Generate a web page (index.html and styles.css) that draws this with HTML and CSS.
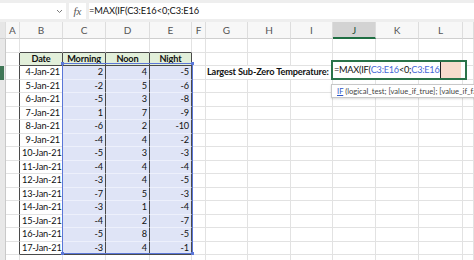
FILE: index.html
```html
<!DOCTYPE html>
<html lang="en">

<head>
    <meta charset="UTF-8">
    <meta name="viewport" content="width=device-width, initial-scale=1.0">
    <title>Temperaturas</title>

    <link rel="stylesheet" href="styles.css">
</head>

<body>
    <!-- barra de formula -->
    <div class="barra">
        <div class="nome-caixa">
            <svg class="seta" width="7" height="5" viewBox="0 0 7 5"><path d="M1 1 L3.5 3.5 L6 1" fill="none" stroke="#7a7a7a" stroke-width="1"/></svg>
        </div>
        <div class="fx-caixa"><i>fx</i></div>
        <div class="formula">=MAX(IF(C3:E16&lt;0;C3:E16</div>
    </div>

    <!-- planilha -->
    <div class="folha">
        <table class="grade">
            <colgroup>
                <col style="width:6px"><col style="width:14px"><col style="width:43px"><col style="width:43px">
                <col style="width:44px"><col style="width:42px"><col style="width:14px"><col style="width:42px">
                <col style="width:43px"><col style="width:42px"><col style="width:43px"><col style="width:43px">
                <col style="width:44px"><col style="width:11px">
            </colgroup>
            <tr class="cab">
                <th class="canto"></th><th>A</th><th>B</th><th>C</th><th>D</th><th>E</th><th>F</th><th>G</th><th>H</th><th>I</th><th class="ativo">J</th><th>K</th><th>L</th><th></th>
            </tr>
            <tr>
                <th class="lin"></th><td></td><td class="tp"></td><td class="tp"></td><td class="tp"></td><td class="tp"></td><td></td><td></td><td></td><td></td><td></td><td></td><td></td><td></td>
            </tr>
            <tr>
                <th class="lin"></th><td class="eq"></td><td class="tit">Date</td><td class="tit">Morning</td><td class="tit">Noon</td><td class="tit">Night</td><td></td><td></td><td></td><td></td><td></td><td></td><td></td><td></td>
            </tr>
            <tr>
                <th class="lin ativa"></th><td class="eq"></td><td class="dt">4-Jan-21</td><td class="s">2</td><td class="s">4</td><td class="s">-5</td><td></td><td class="rotulo" colspan="3">Largest Sub-Zero Temperature:</td><td></td><td></td><td></td><td></td>
            </tr>
            <tr>
                <th class="lin"></th><td class="eq"></td><td class="dt">5-Jan-21</td><td class="s">-2</td><td class="s">5</td><td class="s">-6</td><td></td><td></td><td></td><td></td><td></td><td></td><td></td><td></td>
            </tr>
            <tr>
                <th class="lin"></th><td class="eq"></td><td class="dt">6-Jan-21</td><td class="s">-5</td><td class="s">3</td><td class="s">-8</td><td></td><td></td><td></td><td></td><td></td><td></td><td></td><td></td>
            </tr>
            <tr>
                <th class="lin"></th><td class="eq"></td><td class="dt">7-Jan-21</td><td class="s">1</td><td class="s">7</td><td class="s">-9</td><td></td><td></td><td></td><td></td><td></td><td></td><td></td><td></td>
            </tr>
            <tr>
                <th class="lin"></th><td class="eq"></td><td class="dt">8-Jan-21</td><td class="s">-6</td><td class="s">2</td><td class="s">-10</td><td></td><td></td><td></td><td></td><td></td><td></td><td></td><td></td>
            </tr>
            <tr>
                <th class="lin"></th><td class="eq"></td><td class="dt">9-Jan-21</td><td class="s">-4</td><td class="s">4</td><td class="s">-2</td><td></td><td></td><td></td><td></td><td></td><td></td><td></td><td></td>
            </tr>
            <tr>
                <th class="lin"></th><td class="eq"></td><td class="dt">10-Jan-21</td><td class="s">-5</td><td class="s">3</td><td class="s">-3</td><td></td><td></td><td></td><td></td><td></td><td></td><td></td><td></td>
            </tr>
            <tr>
                <th class="lin"></th><td class="eq"></td><td class="dt">11-Jan-21</td><td class="s">-4</td><td class="s">4</td><td class="s">-4</td><td></td><td></td><td></td><td></td><td></td><td></td><td></td><td></td>
            </tr>
            <tr>
                <th class="lin"></th><td class="eq"></td><td class="dt">12-Jan-21</td><td class="s">-3</td><td class="s">4</td><td class="s">-5</td><td></td><td></td><td></td><td></td><td></td><td></td><td></td><td></td>
            </tr>
            <tr>
                <th class="lin"></th><td class="eq"></td><td class="dt">13-Jan-21</td><td class="s">-7</td><td class="s">5</td><td class="s">-3</td><td></td><td></td><td></td><td></td><td></td><td></td><td></td><td></td>
            </tr>
            <tr>
                <th class="lin"></th><td class="eq"></td><td class="dt">14-Jan-21</td><td class="s">-3</td><td class="s">1</td><td class="s">-4</td><td></td><td></td><td></td><td></td><td></td><td></td><td></td><td></td>
            </tr>
            <tr>
                <th class="lin"></th><td class="eq"></td><td class="dt">15-Jan-21</td><td class="s">-4</td><td class="s">2</td><td class="s">-7</td><td></td><td></td><td></td><td></td><td></td><td></td><td></td><td></td>
            </tr>
            <tr>
                <th class="lin"></th><td class="eq"></td><td class="dt">16-Jan-21</td><td class="s">-5</td><td class="s">8</td><td class="s">-5</td><td></td><td></td><td></td><td></td><td></td><td></td><td></td><td></td>
            </tr>
            <tr class="fim">
                <th class="lin"></th><td class="eq"></td><td class="dt">17-Jan-21</td><td class="s">-3</td><td class="s">4</td><td class="s">-1</td><td></td><td></td><td></td><td></td><td></td><td></td><td></td><td></td>
            </tr>
            <tr>
                <th class="lin"></th><td></td><td></td><td></td><td></td><td></td><td></td><td></td><td></td><td></td><td></td><td></td><td></td><td></td>
            </tr>
        </table>

        <!-- selecao C3:E16 -->
        <div class="selecao">
            <span class="ponto p1"></span><span class="ponto p2"></span>
            <span class="ponto p3"></span><span class="ponto p4"></span>
        </div>

        <!-- celula em edicao -->
        <div class="edicao">
            <span>=MAX(IF(</span><span class="ref">C3:E16</span><span>&lt;0;</span><span class="ref">C3:E16</span><span class="cursor"></span><span class="resto"></span>
        </div>

        <div class="dica">
            <u>IF</u> (logical_test; [value_if_true]; [value_if_false])
        </div>
    </div>
</body>

</html>
```

FILE: styles.css
```css
body {
    margin: 0;
    background: #ffffff;
    overflow: hidden;
    font-family: Lato, 'Liberation Sans', sans-serif;
}

/* barra de formula */
.barra {
    display: flex;
    gap: 3px;
    height: 16px;
    padding: 3px 0;
    background: #eeeeee;
}

.nome-caixa {
    width: 66px;
    background: #ffffff;
    display: flex;
    align-items: center;
    justify-content: flex-end;
    padding-right: 3px;
    box-sizing: border-box;
}

.fx-caixa {
    width: 17px;
    background: #ffffff;
    display: flex;
    align-items: center;
    justify-content: center;
}

.fx-caixa i {
    font-family: 'Liberation Serif', serif;
    font-size: 11px;
    color: #555555;
}

.formula {
    flex: 1;
    background: #ffffff;
    font-size: 9.3px;
    line-height: 16px;
    padding-left: 0;
    letter-spacing: -0.1px;
    color: #111111;
}

/* planilha */
.folha {
    position: relative;
}

.grade {
    border-collapse: separate;
    border-spacing: 0;
    table-layout: fixed;
    width: 474px;
    font-size: 9.2px;
    letter-spacing: -0.15px;
    color: #111111;
}

.grade tr {
    height: 13.5px;
}

.grade td {
    padding: 0 2px;
    line-height: 12px;
    border-right: 1px solid #e2e2e2;
    border-bottom: 1px solid #e2e2e2;
    text-align: right;
    white-space: nowrap;
    overflow: hidden;
}

.cab th {
    height: 15px;
    background: #f7f7f7;
    border-right: 1px solid #dddddd;
    border-bottom: 1px solid #cfcfcf;
    font-size: 10px;
    letter-spacing: 0;
    font-weight: normal;
    color: #555555;
    padding: 0;
}

.cab th.canto {
    background: #e6e6e6;
}

.cab th.ativo {
    background: #d3d3d3;
    border-bottom: 2px solid #1f6e43;
    color: #1f4f33;
}

.lin {
    background: #e8e8e8;
    border-right: 1px solid #c9c9c9;
    padding: 0;
}

.lin.ativa {
    box-shadow: inset 4px 0 #3f7656;
}

/* tabela de dados */
.grade td.tp {
    border-bottom-color: #4a4a4a;
}

.grade td.eq {
    border-right-color: #4a4a4a;
}

.grade td.tit {
    background: #e2efda;
    font-weight: bold;
    text-align: center;
    border-right-color: #4a4a4a;
    border-bottom-color: #4a4a4a;
}

.grade td.dt {
    border-right-color: #4a4a4a;
}

.grade td.s {
    background: #dfe4f6;
    border-right-color: #4a4a4a;
    border-bottom-color: #edf0fb;
}

.fim td.dt,
.fim td.s {
    border-bottom-color: #4a4a4a;
}

.grade td.rotulo {
    text-align: left;
    font-weight: bold;
    padding-left: 1px;
}

/* selecao */
.selecao {
    position: absolute;
    left: 62px;
    top: 41px;
    width: 129px;
    height: 189px;
    border: 1px solid #5a76d8;
}

.ponto {
    position: absolute;
    width: 3px;
    height: 3px;
    background: #5a76d8;
}

.p1 { left: -2px; top: -2px; }
.p2 { right: -2px; top: -2px; }
.p3 { left: -2px; bottom: -2px; }
.p4 { right: -2px; bottom: -2px; }

/* edicao J3 */
.edicao {
    position: absolute;
    left: 331px;
    top: 38px;
    width: 136px;
    height: 20px;
    box-sizing: border-box;
    border: 2px solid #2a7349;
    background: #ffffff;
    display: flex;
    align-items: stretch;
    font-size: 9.2px;
    letter-spacing: -0.25px;
    line-height: 16px;
    color: #111111;
    padding: 0 4px 0 1px;
    white-space: nowrap;
}

.ref {
    color: #4468d6;
}

.cursor {
    width: 1px;
    background: #222222;
}

.resto {
    flex: 1;
    background: #f8dccd;
}

.dica {
    position: absolute;
    left: 331px;
    top: 62px;
    width: 170px;
    height: 14px;
    box-sizing: border-box;
    border: 1px solid #c8c8c8;
    background: #ffffff;
    box-shadow: 0 1px 2px rgba(0, 0, 0, 0.15);
    font-size: 7.6px;
    line-height: 12px;
    color: #444444;
    padding-left: 5px;
    white-space: nowrap;
}

.dica u {
    color: #2f56c8;
}
```
